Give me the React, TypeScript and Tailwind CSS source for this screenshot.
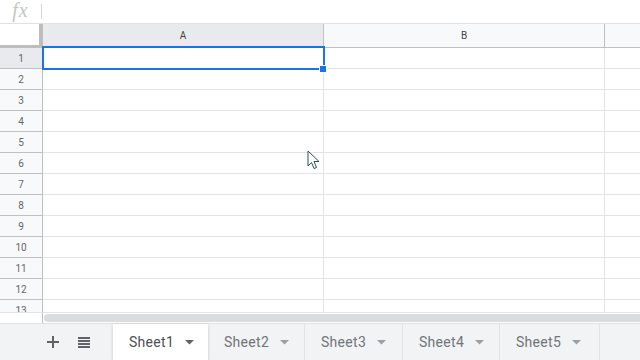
import React from 'react';

const rows = Array.from({ length: 13 }, (_, i) => i + 1);
const sheets = [
  { name: 'Sheet1', w: 'w-[95px]' },
  { name: 'Sheet2', w: 'w-[97px]' },
  { name: 'Sheet3', w: 'w-[98px]' },
  { name: 'Sheet4', w: 'w-[97px]' },
  { name: 'Sheet5', w: 'w-[100px]' },
];

const Caret = ({ color }: { color: string }) => (
  <svg width="9" height="5" viewBox="0 0 9 5" className="ml-[11px]">
    <path d="M0 0 L9 0 L4.5 4.5 Z" fill={color} />
  </svg>
);

export default function App() {
  return (
    <div
      className="relative w-[640px] h-[360px] overflow-hidden bg-white flex flex-col"
      style={{ fontFamily: 'Roboto, "Liberation Sans", Arial, sans-serif' }}
    >
      {/* Formula bar */}
      <div className="h-[24px] flex items-center border-b border-[#e1e1e1] shrink-0">
        <div className="w-[41px] flex items-center justify-center">
          <span
            className="text-[20px] italic text-[#c4c4c4] leading-none -mt-[3px] tracking-[1px]"
            style={{ fontFamily: '"Liberation Serif", "DejaVu Serif", serif' }}
          >
            fx
          </span>
        </div>
        <div className="w-px h-[15px] bg-[#d6d6d6]" />
      </div>

      {/* Column headers */}
      <div className="h-[24px] flex shrink-0">
        <div className="w-[43px] flex flex-col">
          <div className="flex flex-1">
            <div className="flex-1 bg-white" />
            <div className="w-[4px] bg-[#bdbdbd]" />
          </div>
          <div className="h-[3px] bg-[#bdbdbd]" />
        </div>
        <div className="w-[281px] bg-[#e8eaed] border-b border-r border-[#c0c0c0] flex items-center justify-center text-[10px] text-[#444]">
          A
        </div>
        <div className="w-[281px] bg-[#f8f9fa] border-b border-r border-[#c0c0c0] flex items-center justify-center text-[10px] text-[#444]">
          B
        </div>
        <div className="flex-1 bg-[#f8f9fa] border-b border-[#c0c0c0]" />
      </div>

      {/* Grid */}
      <div className="h-[264px] overflow-hidden shrink-0">
        {rows.map((r) => (
          <div key={r} className="h-[21px] flex">
            <div
              className={`w-[43px] border-r border-b border-[#c0c0c0] flex items-center justify-center text-[10px] text-[#666] ${
                r === 1 ? 'bg-[#e8eaed]' : 'bg-[#f8f9fa]'
              }`}
            >
              {r}
            </div>
            <div className="w-[281px] border-r border-b border-[#e2e3e3]" />
            <div className="w-[281px] border-r border-b border-[#e2e3e3]" />
            <div className="flex-1 border-b border-[#e2e3e3]" />
          </div>
        ))}
      </div>

      {/* Horizontal scrollbar strip */}
      <div className="h-[11px] flex items-center shrink-0 border-t border-[#e2e3e3]">
        <div className="w-[43px] h-full border-r border-[#c0c0c0] bg-white" />
        <div className="flex-1 h-[8px] ml-[1px] rounded-l-full bg-[#dadce0]" />
      </div>

      {/* Sheet tabs */}
      <div className="flex-1 flex items-stretch bg-[#f1f3f4] border-t border-[#e0e0e0]">
        <div className="w-[113px] flex items-center">
          <svg width="12" height="12" viewBox="0 0 12 12" className="ml-[47px]">
            <path d="M5 0h2v5h5v2H7v5H5V7H0V5h5z" fill="#5f6368" />
          </svg>
          <svg width="12" height="11" viewBox="0 0 12 11" className="ml-[19px]">
            <rect y="0" width="12" height="2" fill="#5f6368" />
            <rect y="3" width="12" height="2" fill="#5f6368" />
            <rect y="6" width="12" height="2" fill="#5f6368" />
            <rect y="9" width="12" height="2" fill="#5f6368" />
          </svg>
        </div>
        {sheets.map((s, i) => (
          <div
            key={s.name}
            className={`${s.w} flex items-center pl-[16px] text-[14px] tracking-[0.3px] ${
              i === 0
                ? 'bg-white text-[#4b5157] shadow-[0_1px_3px_rgba(60,64,67,0.25)]'
                : 'text-[#70757a] border-r border-[#e2e3e3]'
            }`}
          >
            <span>{s.name}</span>
            <Caret color={i === 0 ? '#5f6368' : '#9aa0a6'} />
          </div>
        ))}
      </div>

      {/* Selection of A1 */}
      <div className="absolute left-[42px] top-[46px] w-[283px] h-[24px] border-2 border-[#1a73e8] pointer-events-none" />
      <div className="absolute left-[320px] top-[65px] w-[6px] h-[6px] bg-[#1a73e8] border border-white box-content -translate-x-[1px]" />

      {/* Mouse cursor */}
      <svg
        width="14"
        height="21"
        viewBox="0 0 14 21"
        className="absolute left-[307px] top-[150px]"
      >
        <path
          d="M1 1 L1 16 L4.5 12.5 L7 18.5 L9.5 17.5 L7 11.5 L12 11.5 Z"
          fill="white"
          stroke="#2f4f4f"
          strokeWidth="1"
          strokeLinejoin="miter"
        />
      </svg>
    </div>
  );
}
